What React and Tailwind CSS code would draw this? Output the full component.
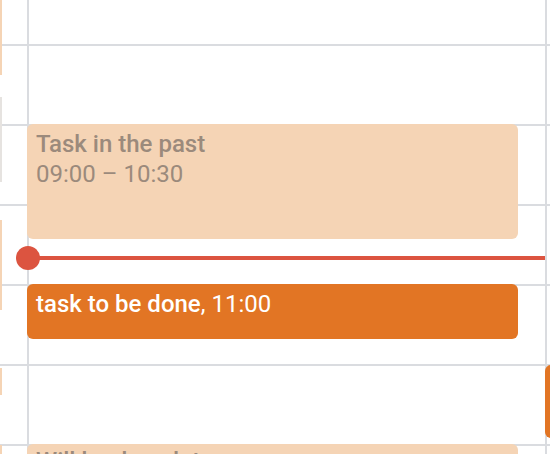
import React from "react";

const HOUR = 80;
const FIRST = 7; // first hour row (partly cut off at the top)

const rows = [7, 8, 9, 10, 11, 12, 13];

const events = [
  { title: "Task in the past", time: "09:00 – 10:30", start: 9, end: 10.5, past: true },
  { title: "task to be done", time: "11:00", start: 11, end: 11.75, inline: true },
  { title: "Will be done later", time: "", start: 13, end: 14, past: true, tight: true },
];

const y = (h) => (h - FIRST) * HOUR - 2;

function Rows() {
  return rows.map((r) => (
    <div key={r} className="h-[80px] border-b-2 border-[#dadce0]" />
  ));
}

function Event({ ev }) {
  const color = ev.past ? "bg-[#f5d4b5] text-[#9b8a7c]" : "bg-[#e27524] text-white";
  const pad = ev.tight ? "pt-[2px]" : "pt-[5px]";
  return (
    <div
      className={`absolute left-[-2px] w-[491px] rounded-[6px] px-[9px] text-[24px] leading-[30px] overflow-hidden ${pad} ${color}`}
      style={{ top: y(ev.start), height: (ev.end - ev.start) * HOUR - 5 }}
    >
      {ev.inline ? (
        <div>
          <span className="font-medium">{ev.title}</span>, {ev.time}
        </div>
      ) : (
        <>
          <div className="font-medium">{ev.title}</div>
          {ev.time && <div>{ev.time}</div>}
        </>
      )}
    </div>
  );
}

export default function App() {
  return (
    <div
      className="relative w-[550px] h-[454px] overflow-hidden bg-white"
      style={{ fontFamily: "Roboto, 'Liberation Sans', sans-serif" }}
    >
      <div className="flex mt-[-34px]">
        {/* previous day, only its right edge shows */}
        <div className="relative w-[27px] shrink-0">
          <Rows />
          <div className="absolute left-0 top-0 flex flex-col w-[2px]">
            <div className="h-[75px] mt-[34px] bg-[#f5d4b5]" />
            <div className="h-[85px] mt-[22px] bg-[#e6e3e0]" />
            <div className="h-[90px] mt-[38px] bg-[#f5d4b5]" />
            <div className="h-[27px] mt-[58px] bg-[#f5d4b5]" />
            <div className="h-[20px] mt-[50px] bg-[#f5d4b5]" />
          </div>
        </div>

        {/* today */}
        <div className="relative w-[520px] shrink-0 border-x-2 border-[#dadce0]">
          <Rows />
          {events.map((ev) => (
            <Event key={ev.title} ev={ev} />
          ))}
        </div>

        {/* next day */}
        <div className="relative flex-1">
          <Rows />
          <div className="absolute left-[-2px] top-[399px] w-[20px] h-[73px] rounded-[6px] bg-[#e27524]" />
        </div>
      </div>

      {/* now indicator */}
      <div className="absolute left-[16px] top-[246px] w-[529px] h-[24px] flex items-center">
        <div className="w-[24px] h-[24px] rounded-full bg-[#dc5440] shrink-0" />
        <div className="flex-1 h-[4px] ml-[-12px] bg-[#dc5440]" />
      </div>
    </div>
  );
}
